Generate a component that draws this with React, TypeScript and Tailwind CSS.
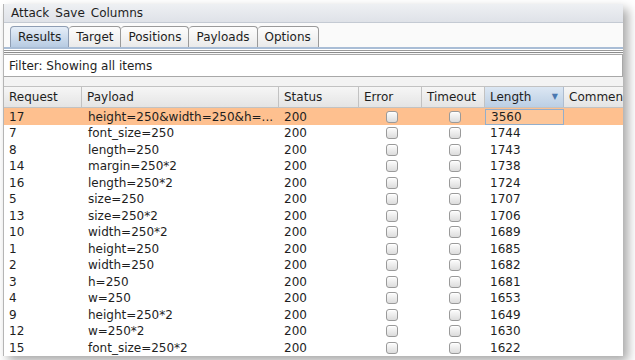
import React from "react";

const ROWS: [string, string, string][] = [
  ["17", "height=250&width=250&h=...", "3560"],
  ["7", "font_size=250", "1744"],
  ["8", "length=250", "1743"],
  ["14", "margin=250*2", "1738"],
  ["16", "length=250*2", "1724"],
  ["5", "size=250", "1707"],
  ["13", "size=250*2", "1706"],
  ["10", "width=250*2", "1689"],
  ["1", "height=250", "1685"],
  ["2", "width=250", "1682"],
  ["3", "h=250", "1681"],
  ["4", "w=250", "1653"],
  ["9", "height=250*2", "1649"],
  ["12", "w=250*2", "1630"],
  ["15", "font_size=250*2", "1622"],
];

const TABS = ["Results", "Target", "Positions", "Payloads", "Options"];

function Checkbox() {
  return <span className="block h-[12px] w-[12px] rounded-[3px] border border-[#9a9a9a] bg-gradient-to-b from-[#fdfdfd] to-[#dcdcdc] shadow-[inset_0_1px_0_#fff]" />;
}

export default function App() {
  return (
    <div className="h-[360px] w-[635px] overflow-hidden bg-white" style={{ fontFamily: '"DejaVu Sans", sans-serif' }}>
      <div className="ml-[3px] mt-[4px] flex h-[352px] w-[620px] flex-col overflow-hidden border-l border-[#b5b5b5] bg-[#f7f7f7] text-[12px] text-[#1e1e1e] shadow-[5px_5px_10px_rgba(0,0,0,0.35)]">
        {/* menu bar */}
        <div className="flex h-[19px] shrink-0 items-center gap-[6px] border-b border-[#c4cad3] bg-gradient-to-b from-[#eef0f3] to-[#dfe2e8] pl-[7px] leading-none">
          <span>Attack</span>
          <span>Save</span>
          <span>Columns</span>
        </div>

        {/* tabs */}
        <div className="flex h-[24px] shrink-0 items-end bg-[#fafafa] pl-[6px]">
          {TABS.map((tab, i) => (
            <div
              key={tab}
              className={
                i === 0
                  ? "flex h-[21px] items-center rounded-t-[4px] border border-b-0 border-[#8e9db3] bg-gradient-to-b from-[#e6eef8] to-[#b7cbe2] px-[7px]"
                  : "flex h-[21px] items-center rounded-t-[4px] border border-b-0 border-l-0 border-[#9a9a9a] bg-gradient-to-b from-[#fdfdfd] to-[#eaeaea] px-[7px]"
              }
            >
              {tab}
            </div>
          ))}
        </div>
        <div className="h-[2px] shrink-0 bg-[#a9bdd6]" />
        <div className="h-[2px] shrink-0 border-b border-[#9a9a9a] bg-white" />
        <div className="h-[2px] shrink-0 border-b border-[#8c8c8c] bg-white" />

        {/* filter */}
        <div className="mt-[1px] flex h-[23px] shrink-0 items-center border border-l-0 border-[#a8a8a8] bg-white pl-[5px]">
          Filter: Showing all items
        </div>
        <div className="h-[9px] shrink-0 bg-[#f3f3f3]" />

        {/* table */}
        <div className="flex-1 bg-white">
          <div className="flex h-[22px] items-stretch border-y border-[#c2c2c2] bg-gradient-to-b from-[#f6f6f6] to-[#e4e4e4]">
            <div className="flex w-[78px] items-center border-r border-[#c2c2c2] pl-[5px]">Request</div>
            <div className="flex w-[197px] items-center border-r border-[#c2c2c2] pl-[5px]">Payload</div>
            <div className="flex w-[80px] items-center border-r border-[#c2c2c2] pl-[5px]">Status</div>
            <div className="flex w-[63px] items-center border-r border-[#c2c2c2] pl-[5px]">Error</div>
            <div className="flex w-[63px] items-center border-r border-[#c2c2c2] pl-[5px]">Timeout</div>
            <div className="flex w-[79px] items-center justify-between border-r border-[#aebdd0] bg-gradient-to-b from-[#dce7f3] to-[#bccfe4] pl-[5px] pr-[5px]">
              <span>Length</span>
              <span className="text-[8px] text-[#4a78b0]">▼</span>
            </div>
            <div className="flex min-w-0 flex-1 items-center whitespace-nowrap pl-[5px]">Commen</div>
          </div>
          {ROWS.map(([req, payload, len], i) => {
            const selected = i === 0;
            return (
              <div key={req} className={`flex h-[16.5px] items-center pt-[1px] leading-none ${selected ? "bg-[#fec08f]" : "bg-white"}`}>
                <div className="w-[78px] pl-[5px]">{req}</div>
                <div className="w-[197px] whitespace-nowrap pl-[6px]">{payload}</div>
                <div className="w-[80px] pl-[5px]">200</div>
                <div className="flex w-[63px] justify-center pl-[2px]">
                  <Checkbox />
                </div>
                <div className="flex w-[63px] justify-center pl-[2px]">
                  <Checkbox />
                </div>
                <div className={`flex h-full w-[79px] items-center pl-[5px] ${selected ? "border border-[#93aecb] bg-[#fdc699]" : ""}`}>{len}</div>
                <div className="flex-1" />
              </div>
            );
          })}
        </div>
      </div>
    </div>
  );
}
